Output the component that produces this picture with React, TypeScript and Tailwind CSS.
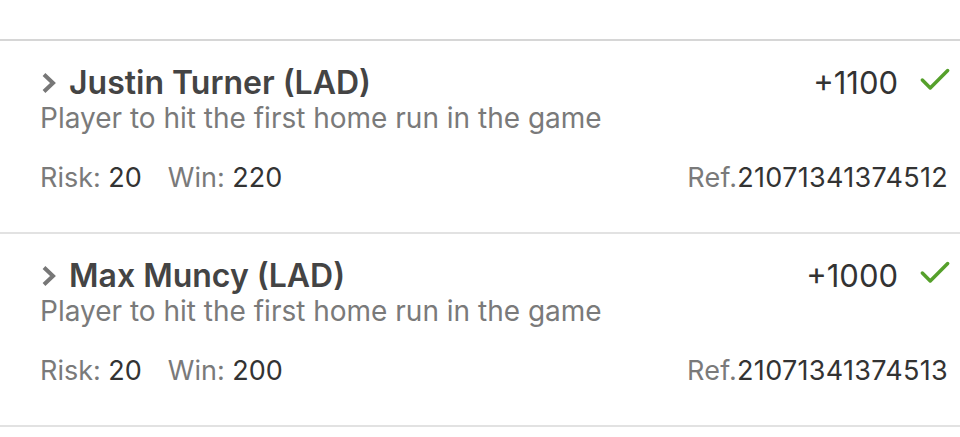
import { Check } from 'lucide-react'

type Bet = {
  player: string
  odds: string
  market: string
  risk: number
  win: number
  ref: string
}

const BETS: Bet[] = [
  {
    player: 'Justin Turner (LAD)',
    odds: '+1100',
    market: 'Player to hit the first home run in the game',
    risk: 20,
    win: 220,
    ref: '21071341374512',
  },
  {
    player: 'Max Muncy (LAD)',
    odds: '+1000',
    market: 'Player to hit the first home run in the game',
    risk: 20,
    win: 200,
    ref: '21071341374513',
  },
]

function Chevron() {
  return (
    <svg width="16" height="22" viewBox="0 0 16 22" className="mr-[13px] shrink-0" aria-hidden>
      <path d="M4 2.5l9 8.5-9 8.5" stroke="#777" strokeWidth="4" fill="none" strokeLinejoin="miter" />
    </svg>
  )
}

function BetRow({ bet }: { bet: Bet }) {
  return (
    <div className="border-b-2 border-[#e2e2e2] pb-[37px] pl-[40px] pr-[12px] pt-[23px]">
      <div className="flex h-[38px] items-center justify-between">
        <div className="flex items-center">
          <Chevron />
          <span className="text-[32px] font-semibold leading-[38px] text-[#444]">{bet.player}</span>
        </div>
        <div className="flex h-[38px] items-center">
          <span className="text-[31px] leading-[38px] text-[#333]">{bet.odds}</span>
          <Check size={38} strokeWidth={2.2} className="ml-[18px] mr-[-6px] mb-[6px] shrink-0 text-[#55a02b]" />
        </div>
      </div>
      <div className="mt-[-1px] text-[28px] leading-[34px] text-[#7a7a7a]">{bet.market}</div>
      <div className="mt-[26px] flex items-center justify-between text-[27px] leading-[34px]">
        <div className="flex gap-[26px]">
          <span>
            <span className="text-[#7a7a7a]">Risk: </span>
            <span className="text-[#333]">{bet.risk}</span>
          </span>
          <span>
            <span className="text-[#7a7a7a]">Win: </span>
            <span className="text-[#333]">{bet.win}</span>
          </span>
        </div>
        <span className="tracking-[0.3px]">
          <span className="text-[#7a7a7a]">Ref.</span>
          <span className="text-[#333]">{bet.ref}</span>
        </span>
      </div>
    </div>
  )
}

export default function App() {
  return (
    <div className="h-[437px] w-[960px] overflow-hidden bg-white" style={{ fontFamily: 'Inter, "Noto Sans", sans-serif' }}>
      <div className="h-[41px] border-b-2 border-[#d6d6d6]" />
      {BETS.map((b) => (
        <BetRow key={b.ref} bet={b} />
      ))}
    </div>
  )
}
